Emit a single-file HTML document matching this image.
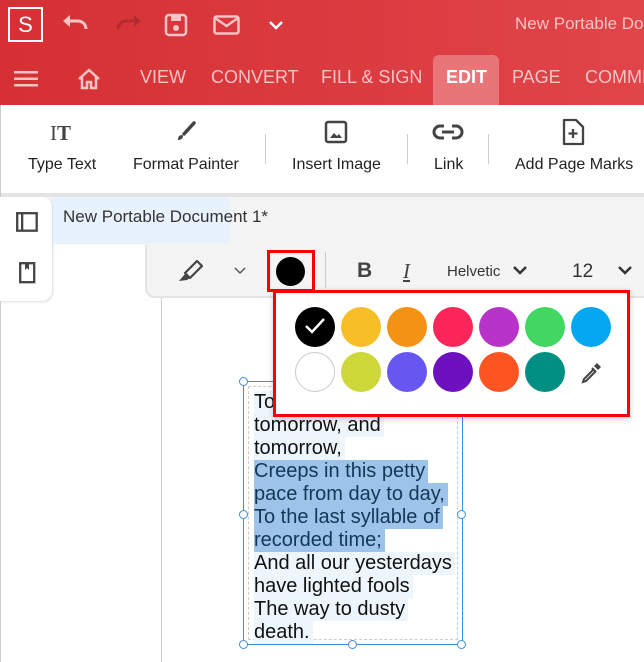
<!DOCTYPE html>
<html><head><meta charset="utf-8"><style>
*{margin:0;padding:0;box-sizing:border-box}
html,body{width:644px;height:662px;overflow:hidden}
body{position:relative;background:#fff;font-family:"Liberation Sans",Arial,sans-serif}
#w{position:absolute;left:0;top:0;width:644px;height:662px;overflow:hidden}
.a{position:absolute}
.hdr{left:0;top:0;width:644px;height:105px;background:linear-gradient(90deg,#d53034,#e0454a)}
.nav{top:67px;font-size:18px;color:#f7c3c5;letter-spacing:0}
.tl{top:156px;font-size:16px;color:#222;white-space:nowrap}
.sep{width:1px;height:30px;background:#ccc;top:134px}
.c{width:40px;height:40px;border-radius:50%}
.ln{position:absolute;left:254px;font-size:20px;line-height:23px;height:23px;padding-right:3px;color:#111;white-space:nowrap}
.l{background:#eef6fd}.h{background:#9bc4e8;color:#13375a}
.hd{width:9px;height:9px;border:1px solid #3b8fe0;border-radius:50%;background:#fff}
</style></head><body><div id="w">
<div class="a hdr"></div>
<div class="a" style="left:8px;top:7px;width:35px;height:35px;border:2px solid #fff;color:#fff;font-size:22px;text-align:center;line-height:31px">S</div>
<svg class="a" style="left:60px;top:12px" width="32" height="26" viewBox="0 0 32 26"><path d="M6 9h12a8 8 0 0 1 8 8" fill="none" stroke="#f7c3c5" stroke-width="3"/><path d="M3 9l7-6v12z" fill="#f7c3c5"/></svg>
<svg class="a" style="left:112px;top:12px" width="32" height="26" viewBox="0 0 32 26"><path d="M26 9H14a8 8 0 0 0-8 8" fill="none" stroke="#b52a2e" stroke-width="3"/><path d="M29 9l-7-6v12z" fill="#b52a2e"/></svg>
<svg class="a" style="left:164px;top:13px" width="24" height="24" viewBox="0 0 24 24"><rect x="2" y="2" width="20" height="20" rx="3" fill="none" stroke="#f7c3c5" stroke-width="2.5"/><rect x="7" y="2" width="10" height="6" fill="#f7c3c5"/><circle cx="12" cy="15" r="3" fill="#f7c3c5"/></svg>
<svg class="a" style="left:213px;top:15px" width="27" height="20" viewBox="0 0 27 20"><rect x="1.5" y="1.5" width="24" height="17" rx="2" fill="none" stroke="#f7c3c5" stroke-width="2.5"/><path d="M2 3l11.5 8L25 3" fill="none" stroke="#f7c3c5" stroke-width="2.5"/></svg>
<svg class="a" style="left:268px;top:19px" width="16" height="12" viewBox="0 0 16 12"><path d="M2 3l6 6 6-6" fill="none" stroke="#fff" stroke-width="2.5"/></svg>
<div class="a" style="left:515px;top:14px;width:129px;overflow:hidden;font-size:17px;color:#f7c3c5;white-space:nowrap">New Portable Document 1</div>
<svg class="a" style="left:14px;top:70px" width="24" height="18"><rect y="1" width="24" height="2.5" fill="#f7c3c5"/><rect y="7.5" width="24" height="2.5" fill="#f7c3c5"/><rect y="14" width="24" height="2.5" fill="#f7c3c5"/></svg>
<svg class="a" style="left:77px;top:67px" width="24" height="24" viewBox="0 0 24 24"><path d="M2 12L12 3l10 9M5 10v11h5v-6h4v6h5V10" fill="none" stroke="#f7c3c5" stroke-width="2.5"/></svg>
<div class="a nav" style="left:140px">VIEW</div>
<div class="a nav" style="left:211px">CONVERT</div>
<div class="a nav" style="left:321px">FILL &amp; SIGN</div>
<div class="a" style="left:433px;top:55px;width:66px;height:50px;background:#e87678;border-radius:6px 6px 0 0"></div>
<div class="a nav" style="left:446px;color:#fff;font-weight:bold">EDIT</div>
<div class="a nav" style="left:512px">PAGE</div>
<div class="a nav" style="left:585px;width:59px;overflow:hidden;white-space:nowrap">COMMENT</div>
<div class="a" style="left:50px;top:121px;font-size:21px;font-weight:bold;color:#444;font-family:'Liberation Serif'"><span style="font-weight:normal">I</span>T</div>
<svg class="a" style="left:173px;top:120px" width="24" height="24" viewBox="0 0 24 24"><path d="M21 3L11 14" stroke="#444" stroke-width="3.5" stroke-linecap="round"/><path d="M9 15c-3 0-4 2-4 5 2 0 5-1 5-4z" fill="#444"/></svg>
<svg class="a" style="left:324px;top:120px" width="24" height="24" viewBox="0 0 24 24"><rect x="2" y="2" width="20" height="20" rx="2" fill="none" stroke="#444" stroke-width="2.5"/><path d="M6 18l4-5 3 3 2-2 3 4z" fill="#444"/></svg>
<svg class="a" style="left:432px;top:123px" width="32" height="18" viewBox="0 0 32 18"><path d="M12 3H8a6 6 0 0 0 0 12h4M20 3h4a6 6 0 0 1 0 12h-4M10 9h12" fill="none" stroke="#444" stroke-width="3"/></svg>
<svg class="a" style="left:561px;top:118px" width="24" height="28" viewBox="0 0 24 28"><path d="M3 2h12l7 7v17H3z" fill="none" stroke="#444" stroke-width="2.3" stroke-linejoin="round"/><path d="M12 11v9M7.5 15.5h9" stroke="#444" stroke-width="2.3"/></svg>
<div class="a tl" style="left:28px">Type Text</div>
<div class="a tl" style="left:133px">Format Painter</div>
<div class="a sep" style="left:265px"></div>
<div class="a tl" style="left:292px">Insert Image</div>
<div class="a sep" style="left:407px"></div>
<div class="a tl" style="left:434px">Link</div>
<div class="a sep" style="left:488px"></div>
<div class="a tl" style="left:515px">Add Page Marks</div>
<div class="a" style="left:0;top:193px;width:644px;height:4px;background:#e4e4e4"></div>
<div class="a" style="left:0;top:197px;width:644px;height:48px;background:#f4f4f4"></div>
<div class="a" style="left:52px;top:197px;width:178px;height:46px;background:#e7f2fc"></div>
<div class="a" style="left:63px;top:207px;font-size:17px;color:#333;white-space:nowrap">New Portable Document 1*</div>
<div class="a" style="left:0;top:105px;width:1px;height:557px;background:#ccc"></div>
<div class="a" style="left:0;top:197px;width:52px;height:104px;background:#fff;border-radius:0 10px 10px 0;box-shadow:1px 1px 2px #ddd"></div>
<svg class="a" style="left:16px;top:212px" width="22" height="20"><rect x="1.2" y="1.2" width="19.5" height="17.5" fill="none" stroke="#444" stroke-width="2.3"/><rect x="5" y="1" width="2.3" height="18" fill="#444"/></svg>
<svg class="a" style="left:19px;top:262px" width="17" height="22"><rect x="1.2" y="1.2" width="14" height="19" fill="none" stroke="#444" stroke-width="2.3"/><path d="M6 1v7l2-2 2 2V1" fill="#444"/></svg>
<div class="a" style="left:161px;top:298px;width:1px;height:364px;background:#ccc"></div>
<div class="a" style="left:145px;top:245px;width:510px;height:53px;background:#f4f4f4;border:2px solid #e4e4e4;border-top:none;border-radius:0 0 0 10px"></div>
<svg class="a" style="left:175px;top:258px" width="32" height="28" viewBox="0 0 32 28"><path d="M22 3l5 5-12 12-5-5z" fill="none" stroke="#444" stroke-width="2.2" stroke-linejoin="round"/><path d="M10 16l-6 7 8-1 3-2z" fill="#444"/></svg>
<svg class="a" style="left:234px;top:267px" width="12" height="8"><path d="M1 1l5 5 5-5" fill="none" stroke="#555" stroke-width="1.5"/></svg>
<div class="a" style="left:267px;top:250px;width:48px;height:42px;border:3px solid #f00"></div>
<div class="a" style="left:276px;top:257px;width:29px;height:29px;border-radius:50%;background:#000"></div>
<div class="a" style="left:325px;top:252px;width:1px;height:36px;background:#ccc"></div>
<div class="a" style="left:357px;top:259px;font-size:21px;font-weight:bold;color:#444">B</div>
<div class="a" style="left:403px;top:259px;font-size:21px;font-style:italic;color:#444;font-family:'Liberation Serif'"><span style="text-decoration:underline">I</span></div>
<div class="a" style="left:447px;top:263px;font-size:15px;color:#333">Helvetic</div>
<svg class="a" style="left:513px;top:266px" width="14" height="9"><path d="M1 1l6 6 6-6" fill="none" stroke="#333" stroke-width="2.5"/></svg>
<div class="a" style="left:572px;top:261px;font-size:19px;color:#333">12</div>
<svg class="a" style="left:618px;top:266px" width="14" height="9"><path d="M1 1l6 6 6-6" fill="none" stroke="#333" stroke-width="2.5"/></svg>
<div class="a" style="left:243px;top:381px;width:220px;height:264px;border:1px solid #3b8fe0"></div>
<div class="a" style="left:248px;top:386px;width:210px;height:254px;border:1px dashed #ccc"></div>
<div class="ln l" style="top:391px">To</div>
<div class="ln l" style="top:414px">tomorrow, and</div>
<div class="ln l" style="top:437px">tomorrow,</div>
<div class="ln h" style="top:460px">Creeps in this petty</div>
<div class="ln h" style="top:483px">pace from day to day,</div>
<div class="ln h" style="top:506px">To the last syllable of</div>
<div class="ln h" style="top:529px">recorded time;</div>
<div class="ln l" style="top:552px">And all our yesterdays</div>
<div class="ln l" style="top:575px">have lighted fools</div>
<div class="ln l" style="top:598px">The way to dusty</div>
<div class="ln l" style="top:621px">death.</div>
<div class="a hd" style="left:239px;top:377px"></div>
<div class="a hd" style="left:239px;top:510px"></div>
<div class="a hd" style="left:457px;top:510px"></div>
<div class="a hd" style="left:239px;top:640px"></div>
<div class="a hd" style="left:348px;top:640px"></div>
<div class="a hd" style="left:457px;top:640px"></div>
<div class="a" style="left:273px;top:290px;width:357px;height:127px;background:#fff;border:3px solid #f00;box-shadow:0 2px 6px rgba(0,0,0,.2)"></div>
<div class="a c" style="left:295px;top:307px;background:#000"></div>
<svg class="a" style="left:303px;top:316px" width="24" height="20"><path d="M3 10l6 6L21 3" fill="none" stroke="#fff" stroke-width="2.5"/></svg>
<div class="a c" style="left:341px;top:307px;background:#f7bf27"></div>
<div class="a c" style="left:387px;top:307px;background:#f39313"></div>
<div class="a c" style="left:433px;top:307px;background:#fb2559"></div>
<div class="a c" style="left:479px;top:307px;background:#b834c9"></div>
<div class="a c" style="left:525px;top:307px;background:#41d762"></div>
<div class="a c" style="left:571px;top:307px;background:#05a8f0"></div>
<div class="a c" style="left:295px;top:352px;background:#fff;border:1px solid #ccc"></div>
<div class="a c" style="left:341px;top:352px;background:#cdd938"></div>
<div class="a c" style="left:387px;top:352px;background:#6757f0"></div>
<div class="a c" style="left:433px;top:352px;background:#6e10bf"></div>
<div class="a c" style="left:479px;top:352px;background:#fc5522"></div>
<div class="a c" style="left:525px;top:352px;background:#008f82"></div>
<svg class="a" style="left:579px;top:361px" width="24" height="24" viewBox="0 0 24 24"><path d="M13 7l4 4M14.5 8.5L5 18l-1 3 3-1 9.5-9.5" fill="none" stroke="#444" stroke-width="2"/><path d="M15 5l3-3 4 4-3 3z" fill="#444"/></svg>
</div></body></html>
